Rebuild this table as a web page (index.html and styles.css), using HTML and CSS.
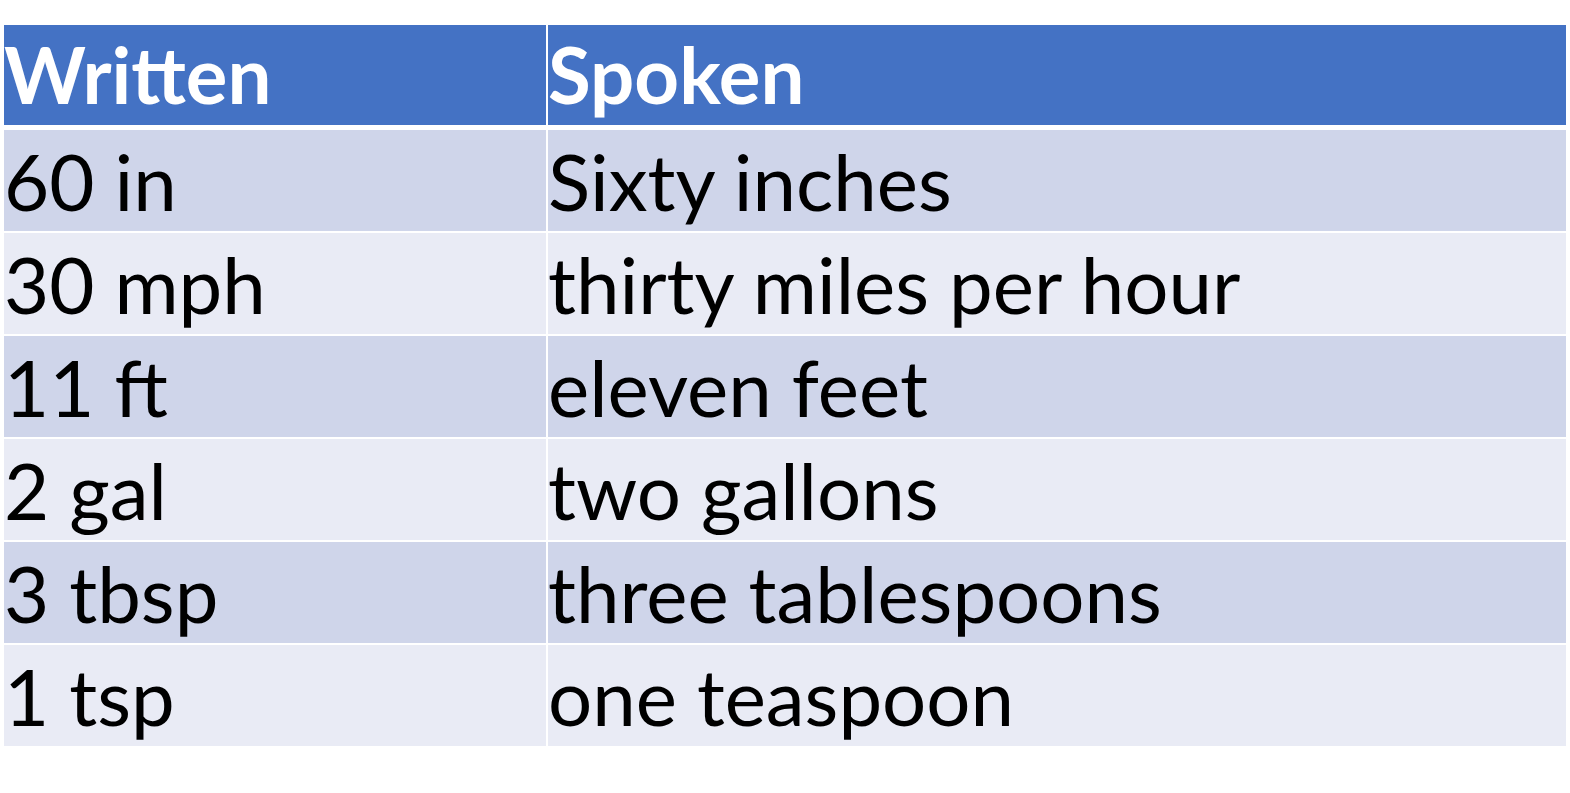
FILE: index.html
```html
<!DOCTYPE html>
<html lang="en">
<head>
<meta charset="utf-8">
<title>Written vs Spoken</title>
<link rel="stylesheet" href="styles.css">
</head>
<body>
<div class="page">
  <div class="table">
    <div class="cell head">Written</div>
    <div class="cell head">Spoken</div>
    <div class="cell odd">60 in</div>
    <div class="cell odd">Sixty inches</div>
    <div class="cell even">30 mph</div>
    <div class="cell even">thirty miles per hour</div>
    <div class="cell odd">11 ft</div>
    <div class="cell odd">eleven feet</div>
    <div class="cell even">2 gal</div>
    <div class="cell even">two gallons</div>
    <div class="cell odd">3 tbsp</div>
    <div class="cell odd">three tablespoons</div>
    <div class="cell even">1 tsp</div>
    <div class="cell even">one teaspoon</div>
  </div>
</div>
</body>
</html>
```
FILE: styles.css
```css
html, body {
  margin: 0;
  padding: 0;
  background: #ffffff;
}
.page {
  padding: 25px 0 0 4px;
}
.table {
  display: grid;
  grid-template-columns: 542px 1018px;
  grid-template-rows: 103px repeat(6, 101px);
  column-gap: 2px;
  row-gap: 2px;
  width: 1562px;
  font-family: Lato, "Open Sans", sans-serif;
  font-size: 78px;
  color: #000000;
}
.cell {
  display: flex;
  align-items: center;
  padding: 0;
  white-space: nowrap;
  overflow: hidden;
}
.head {
  background: #4472c4;
  color: #ffffff;
  font-weight: 700;
  margin-bottom: 3px;
  padding-bottom: 2px;
}
.odd {
  background: #cfd5ea;
}
.even {
  background: #e9ebf5;
}
```
